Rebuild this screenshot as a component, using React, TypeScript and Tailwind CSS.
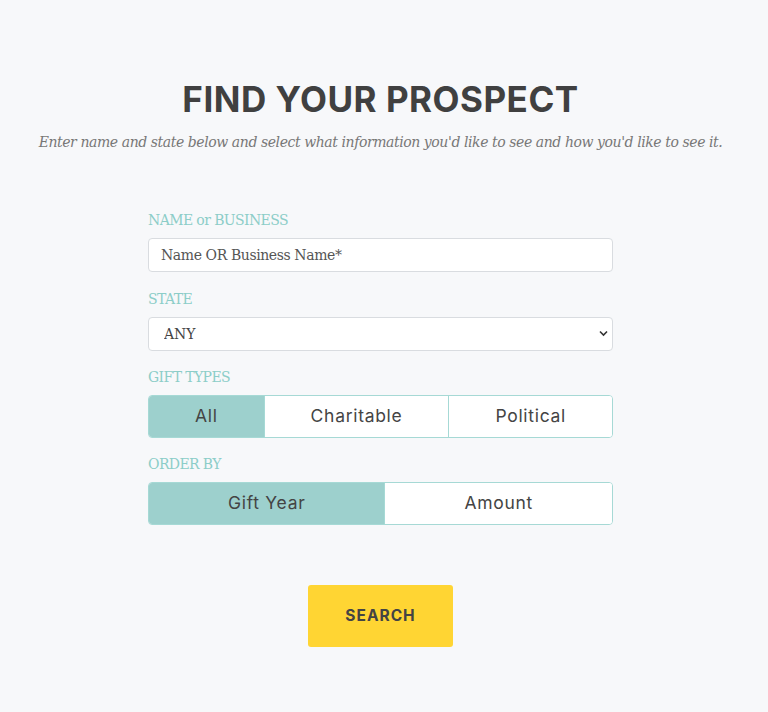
import React, { useState } from 'react';

const giftTypes = ['All', 'Charitable', 'Political'];
const orderOptions = ['Gift Year', 'Amount'];

const labelClass =
  "block text-[14px] leading-[18px] text-[#8ccdc8] mb-[9px] [font-family:'DejaVu_Serif',serif] tracking-[-0.6px]";

interface ToggleGroupProps {
  options: string[];
  value: string;
  onChange: (v: string) => void;
}

const ToggleGroup: React.FC<ToggleGroupProps> = ({ options, value, onChange }) => (
  <div className="flex h-[43px] w-full rounded-[4px] border border-[#a6d9d5] overflow-hidden bg-white">
    {options.map((opt, i) => (
      <button
        key={opt}
        type="button"
        onClick={() => onChange(opt)}
        className={
          "flex-auto h-full text-[17.5px] tracking-[0.7px] text-[#444] [font-family:Inter,sans-serif] " +
          (i > 0 ? 'border-l border-[#a6d9d5] ' : '') +
          (value === opt ? 'bg-[#9dd0cd]' : 'bg-white')
        }
      >
        {opt}
      </button>
    ))}
  </div>
);

export default function App() {
  const [gift, setGift] = useState('All');
  const [order, setOrder] = useState('Gift Year');

  return (
    <div className="min-h-[712px] w-full bg-[#f7f8fa]">
      <div className="w-[761px] pt-[78px]">
        <h1 className="text-center text-[35px] leading-[42px] font-bold text-[#404040] [font-family:Inter,sans-serif] tracking-[0.5px]">
          FIND YOUR PROSPECT
        </h1>
        <p className="mt-[12px] text-center text-[14px] leading-[20px] italic text-[#777] [font-family:'DejaVu_Serif',serif] tracking-[-0.42px]">
          Enter name and state below and select what information you'd like to see and how you'd like to see it.
        </p>

        <form className="mx-auto mt-[59px] w-[465px]" onSubmit={e => e.preventDefault()}>
          <label className={labelClass}>NAME or BUSINESS</label>
          <input
            type="text"
            placeholder="Name OR Business Name*"
            className="block w-full h-[34px] rounded-[4px] border border-[#d9dce0] bg-white px-[12px] text-[14px] text-[#555] placeholder:text-[#555] [font-family:'DejaVu_Serif',serif] tracking-[-0.4px] outline-none"
          />

          <label className={labelClass + ' mt-[18px]'}>STATE</label>
          <div className="relative">
            <select className="block w-full h-[34px] appearance-none rounded-[4px] border border-[#d9dce0] bg-white px-[15px] text-[14px] text-[#444] [font-family:'DejaVu_Serif',serif] outline-none">
              <option>ANY</option>
            </select>
            <svg
              className="pointer-events-none absolute right-[5px] top-[13px]"
              width="9"
              height="7"
              viewBox="0 0 9 7"
              fill="none"
            >
              <path d="M1 1.5l3.5 3.5L8 1.5" stroke="#333" strokeWidth="1.6" />
            </svg>
          </div>

          <label className={labelClass + ' mt-[17px]'}>GIFT TYPES</label>
          <ToggleGroup options={giftTypes} value={gift} onChange={setGift} />

          <label className={labelClass + ' mt-[17px]'}>ORDER BY</label>
          <ToggleGroup options={orderOptions} value={order} onChange={setOrder} />

          <div className="mt-[60px] flex justify-center">
            <button
              type="submit"
              className="w-[145px] h-[62px] rounded-[3px] bg-[#ffd533] text-[15.5px] font-bold text-[#444] [font-family:Inter,sans-serif] tracking-[1px]"
            >
              SEARCH
            </button>
          </div>
        </form>
      </div>
    </div>
  );
}
